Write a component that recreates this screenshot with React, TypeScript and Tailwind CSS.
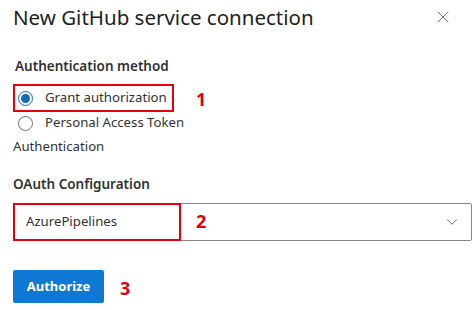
import { ChevronDown, X } from 'lucide-react'

const font = { fontFamily: '"Noto Sans", "Open Sans", sans-serif' }

const Radio = ({ checked }: { checked: boolean }) => (
  <span
    className={`flex h-[15px] w-[15px] items-center justify-center rounded-full border ${
      checked ? 'border-[#0f6cbd] border-[1.5px]' : 'border-[#707070]'
    }`}
  >
    {checked && <span className="h-[9px] w-[9px] rounded-full bg-[#0f6cbd]" />}
  </span>
)

const Marker = ({ n }: { n: string }) => (
  <span className="text-[18px] font-bold leading-none text-[#e3000f]">{n}</span>
)

export default function App() {
  return (
    <div className="h-[310px] w-[474px] overflow-hidden bg-white text-[#323130]" style={font}>
      {/* Header */}
      <div className="flex items-center justify-between pl-[13px] pr-[21px] pt-[2px]">
        <h1 className="text-[20.5px] leading-[30px] font-normal text-[#201f1e]">New GitHub service connection</h1>
        <X className="h-[20px] w-[20px] text-[#605e5c]" strokeWidth={1.1} />
      </div>

      <div className="px-[13px]">
        <div className="mt-[25px] pl-[2px] text-[13.5px] leading-[19px] font-semibold text-[#323130]">Authentication method</div>

        {/* Radio group */}
        <div className="mt-[8px] flex items-center">
          <div className="flex h-[28px] w-[161px] items-center gap-[12px] border-2 border-[#e3000f] pl-[3px]">
            <Radio checked />
            <span className="text-[13.2px]">Grant authorization</span>
          </div>
          <span className="ml-[22px] mt-[3px]">
            <Marker n="1" />
          </span>
        </div>
        <div className="flex h-[22px] items-center gap-[12px] pl-[5px]">
          <Radio checked={false} />
          <span className="text-[13.2px]">Personal Access Token</span>
        </div>
        <div className="mt-[3px] text-[13.2px] leading-[18px]">Authentication</div>

        <div className="mt-[20px] text-[13.5px] leading-[18px] font-semibold">OAuth Configuration</div>

        {/* Select */}
        <div className="mt-[10px] flex h-[38px] w-[459px] items-center rounded-[2px] border border-[#8a8886]">
          <div className="-ml-px flex h-[38px] w-[168px] items-center border-2 border-[#e3000f] pl-[11px] text-[13.2px]">
            AzurePipelines
          </div>
          <span className="ml-[15px]">
            <Marker n="2" />
          </span>
          <ChevronDown className="ml-auto mr-[10px] h-[18px] w-[18px] text-[#605e5c]" strokeWidth={1.3} />
        </div>

        {/* Action */}
        <div className="mt-[29px] flex items-center">
          <button className="h-[33px] w-[91px] rounded-[2px] bg-[#0f78d4] text-[13px] font-bold text-white">
            Authorize
          </button>
          <span className="ml-[16px] mt-[4px]">
            <Marker n="3" />
          </span>
        </div>
      </div>
    </div>
  )
}
